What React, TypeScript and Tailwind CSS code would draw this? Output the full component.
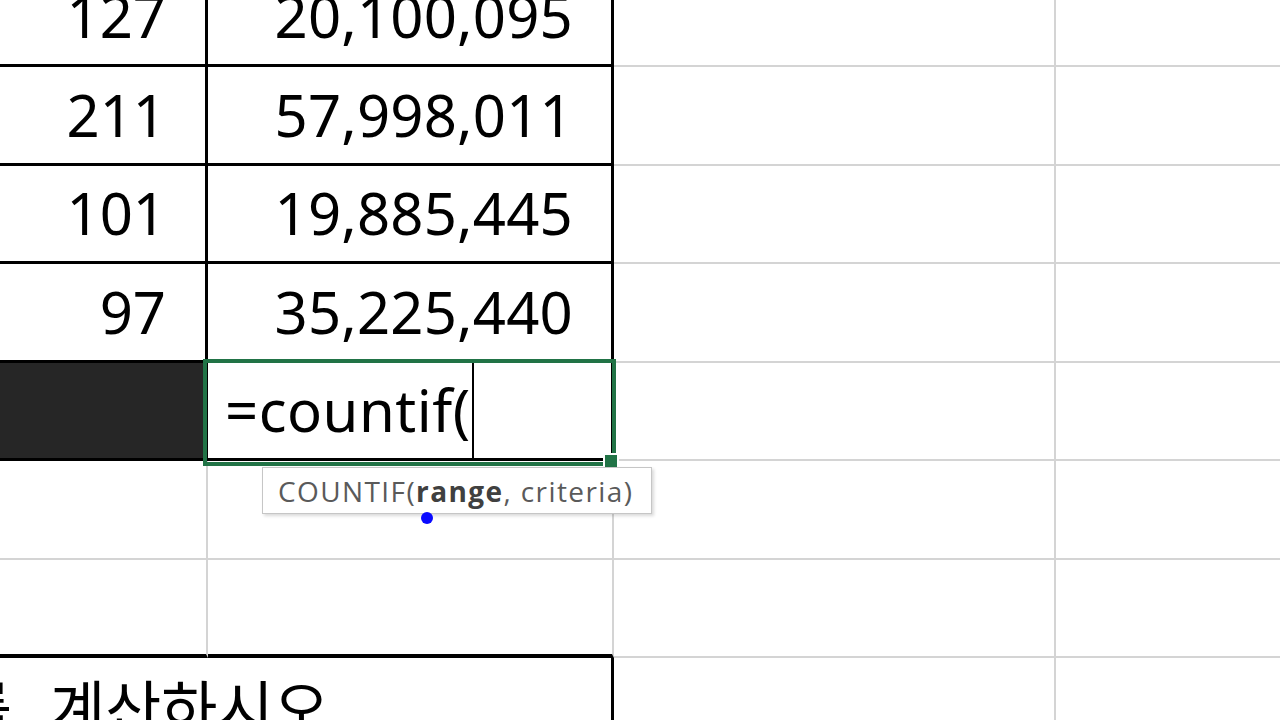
import React from "react";

const rows = [
  { a: "127", b: "20,100,095" },
  { a: "211", b: "57,998,011" },
  { a: "101", b: "19,885,445" },
  { a: "97", b: "35,225,440" },
];

// empty columns C and D with plain gridlines
const EmptyCells = () => (
  <>
    <div className="h-full w-[442px] shrink-0 border-r-2 border-b-2 border-[#d4d4d4]" />
    <div className="h-full flex-1 border-b-2 border-[#d4d4d4]" />
  </>
);

const ActiveCell = () => {
  return (
    <div className="relative z-10 flex h-full w-[406px] shrink-0 items-end border-r-[3px] border-b-[3px] border-black pb-[19px] pl-[17px] text-[58px] leading-none tracking-[0.5px]">
      <span className="relative">
        =countif(
        {/* text cursor */}
        <span className="absolute top-[-21px] bottom-[-21px] left-full ml-[1px] w-[2px] bg-black" />
      </span>

      {/* selection border */}
      <div className="pointer-events-none absolute top-[-3.5px] left-[-5px] h-[107px] w-[413px] border-4 border-[#217346]" />
      {/* fill handle */}
      <div className="absolute top-[90.5px] left-[395px] h-[16px] w-[16px] border-2 border-white bg-[#217346]" />

      {/* function tooltip */}
      <div className="absolute top-[104.5px] left-[54px] flex h-[47px] w-[390px] items-center border-[1.5px] border-[#c6c6c6] bg-white pl-[15px] font-['Open_Sans',sans-serif] text-[28px] tracking-[1.4px] text-[#5a5a5a] shadow-[2px_2px_3px_rgba(0,0,0,0.15)]">
        COUNTIF(<span className="font-bold text-[#404040]">range</span>, criteria)
      </div>
      {/* blue dot */}
      <div className="absolute top-[149.5px] left-[213px] h-[12px] w-[12px] rounded-full bg-[#0a0aff]" />
    </div>
  );
};

export default function App() {
  return (
    <div className="h-[720px] w-[1280px] overflow-hidden bg-white font-['Noto_Sans','Noto_Sans_CJK_KR',sans-serif] text-black">
      <div className="mt-[-31.5px] flex flex-col">
        {rows.map((r) => (
          <div key={r.b} className="flex h-[98.5px]">
            <div className="flex h-full w-[208px] shrink-0 items-end justify-end border-r-[3px] border-b-[3px] border-black pr-[39px] pb-[19px] text-[58px] leading-none">
              {r.a}
            </div>
            <div className="flex h-full w-[406px] shrink-0 items-end justify-end border-r-[3px] border-b-[3px] border-black pr-[38px] pb-[19px] text-[58px] leading-none tracking-[0.2px]">
              {r.b}
            </div>
            <EmptyCells />
          </div>
        ))}

        {/* row being edited */}
        <div className="flex h-[98.5px]">
          <div className="h-full w-[208px] shrink-0 border-r-[3px] border-b-[3px] border-black bg-[#262626]" />
          <ActiveCell />
          <EmptyCells />
        </div>

        <div className="flex h-[98.5px]">
          <div className="h-full w-[208px] shrink-0 border-r-2 border-b-2 border-[#d4d4d4]" />
          <div className="h-full w-[406px] shrink-0 border-r-2 border-b-2 border-[#d4d4d4]" />
          <EmptyCells />
        </div>

        <div className="flex h-[98.5px]">
          <div className="h-full w-[208px] shrink-0 border-r-2 border-b-4 border-r-[#d4d4d4] border-b-black" />
          <div className="h-full w-[406px] shrink-0 border-r-2 border-b-4 border-r-[#d4d4d4] border-b-black" />
          <EmptyCells />
        </div>

        {/* merged question cell */}
        <div className="flex h-[98.5px]">
          <div className="h-full w-[614px] shrink-0 overflow-hidden border-r-[3px] border-black pt-[20px] text-[61px] leading-none whitespace-nowrap">
            <span className="ml-[-44px]">를</span>
            <span className="ml-[37px]">계산하시오</span>
          </div>
          <EmptyCells />
        </div>
      </div>
    </div>
  );
}
